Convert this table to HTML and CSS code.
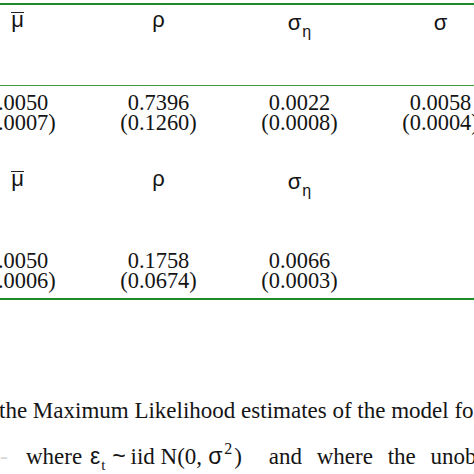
FILE: index.html
```html
<!DOCTYPE html>
<html>
<head>
<meta charset="utf-8">
<link rel="stylesheet" href="styles.css">
</head>
<body>
<div class="rule rule-thick rule-top"></div>
<div class="grid head head-first">
  <div class="cell"><span class="bar">μ</span></div>
  <div class="cell">ρ</div>
  <div class="cell"><span class="sig">σ<sub class="eta">η</sub></span></div>
  <div class="cell"><span class="sig">σ</span></div>
</div>
<div class="rule rule-thin"></div>
<div class="grid vals vals-first">
  <div class="cell">0.0050</div>
  <div class="cell">0.7396</div>
  <div class="cell">0.0022</div>
  <div class="cell">0.0058</div>
  <div class="cell">(0.0007)</div>
  <div class="cell">(0.1260)</div>
  <div class="cell">(0.0008)</div>
  <div class="cell">(0.0004)</div>
</div>
<div class="grid head head-second">
  <div class="cell"><span class="bar">μ</span></div>
  <div class="cell">ρ</div>
  <div class="cell"><span class="sig">σ<sub class="eta">η</sub></span></div>
  <div class="cell"></div>
</div>
<div class="grid vals">
  <div class="cell">0.0050</div>
  <div class="cell">0.1758</div>
  <div class="cell">0.0066</div>
  <div class="cell"></div>
  <div class="cell">(0.0006)</div>
  <div class="cell">(0.0674)</div>
  <div class="cell">(0.0003)</div>
  <div class="cell"></div>
</div>
<div class="rule rule-thick rule-bottom"></div>
<div class="caption">
  <div class="line line-one">the Maximum Likelihood estimates of the model for</div>
  <div class="line line-two"><span class="mark">-</span>where <span class="math"><span class="gk">ε</span><sub class="sub-t">t</sub> <span class="gk tilde">~</span>iid N(0,<span class="gk sig2">σ</span><sup class="sq">2</sup>)</span> and where the unobserved</div>
</div>
</body>
</html>
```
FILE: styles.css
```css
html, body {
  margin: 0;
  padding: 0;
  overflow: hidden;
  background: #fff;
}
body {
  width: 474px;
  height: 474px;
  color: #141414;
  font-family: "Liberation Serif", "Times New Roman", serif;
  font-size: 22px;
}
.rule { width: 474px; }
.rule-thick { height: 2px; background: #1f8a28; }
.rule-top { margin-top: 3px; }
.rule-thin { height: 1px; background: #3f9b3c; }
.rule-bottom { margin-top: 8px; }

.grid {
  display: grid;
  grid-template-columns: repeat(4, 141px);
  width: 564px;
  margin-left: -53px;
  text-align: center;
  white-space: nowrap;
}
.head {
  font-family: "Liberation Sans", Arial, sans-serif;
  font-size: 22px;
  line-height: 22px;
}
.head-first { margin-top: 4px; height: 76px; }
.head-second { margin-top: 36px; height: 83px; }
.bar {
  display: inline-block;
  border-top: 1.5px solid #222;
  line-height: 13px;
  margin-top: 3px;
}
.sig { display: inline-block; vertical-align: -3px; }
.eta {
  font-size: 16px;
  vertical-align: -7px;
  line-height: 0;
  margin-left: 1px;
}
.vals {
  line-height: 19.5px;
  font-size: 22.4px;
}
.vals-first { margin-top: 7px; }

.caption { margin-top: 98px; font-size: 23px; }
.line { white-space: nowrap; line-height: 25px; }
.line-one { margin-left: -1px; }
.line-two { margin-top: 21px; padding-left: 26px; word-spacing: 9px; position: relative; }
.mark {
  position: absolute;
  left: 0;
  color: #d6d6d6;
  word-spacing: 0;
}
.math { word-spacing: 0; margin-left: -7px; margin-right: 12px; }
.gk { font-family: "Liberation Sans", Arial, sans-serif; }
.tilde { margin: 0 5px 0 1px; }
.sig2 { margin-left: 6px; }
.sub-t { font-size: 15px; vertical-align: -6px; line-height: 0; margin-left: 1px; }
.sq { font-size: 16px; vertical-align: 10px; line-height: 0; margin-left: 2px; margin-right: 2px; }
```
